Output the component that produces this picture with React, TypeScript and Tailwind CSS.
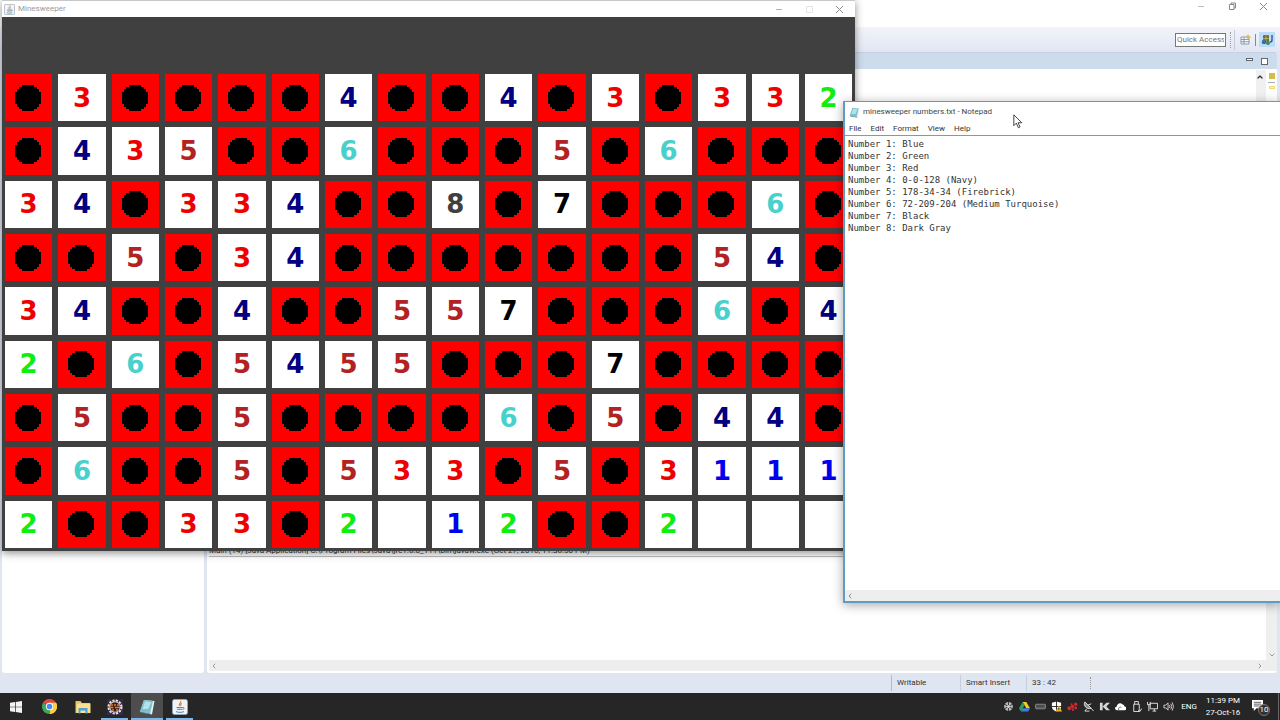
import { ReactNode } from "react";
import { ChevronLeft, ChevronRight, ChevronDown, ChevronUp } from "lucide-react";

// "M" is a mine, "." is an empty cell
const board = [
  "M3MMMM4MM4M3M332",
  "M435MM6MMM5M6MMM",
  "34M334MM8M7MMM6M",
  "MM5M34MMMMMMM54M",
  "34MM4MM557MMM6M4",
  "2M6M5455MMM7MMMM",
  "M5MM5MMMM6M5M44M",
  "M6MM5M533M5M3111",
  "2MM33M2.12MM2...",
];

const colors: Record<string, string> = {
  "1": "text-[#0000ee]",
  "2": "text-[#0fee0f]",
  "3": "text-[#ee0000]",
  "4": "text-[#000080]",
  "5": "text-[#b22222]",
  "6": "text-[#48d1cc]",
  "7": "text-black",
  "8": "text-[#404040]",
};

const notes = [
  "Number 1: Blue",
  "Number 2: Green",
  "Number 3: Red",
  "Number 4: 0-0-128 (Navy)",
  "Number 5: 178-34-34 (Firebrick)",
  "Number 6: 72-209-204 (Medium Turquoise)",
  "Number 7: Black",
  "Number 8: Dark Gray",
];

function Mine() {
  return (
    <svg viewBox="0 0 26 26" className="mr-px h-[26px] w-[26px]" shapeRendering="crispEdges">
      <path d="M7 0h12v2h3v2h2v3h2v12h-2v3h-2v2h-3v2H7v-2H4v-2H2v-3H0V7h2V4h2V2h3z" />
    </svg>
  );
}

function Cell({ value }: { value: string }) {
  if (value === "M") {
    return (
      <button aria-label="Mine" className="flex aspect-square items-center justify-center bg-[#fe0000]">
        <Mine />
      </button>
    );
  }
  return (
    <button
      aria-label={value === "." ? "Empty" : undefined}
      className={`flex aspect-square items-center justify-center bg-white font-['DejaVu_Sans',sans-serif] text-[26px] leading-none font-bold ${colors[value] ?? ""}`}
    >
      {value === "." ? null : value}
    </button>
  );
}

function JavaIcon({ className }: { className: string }) {
  return (
    <svg viewBox="0 0 16 16" className={className}>
      <rect x="0.5" y="0.5" width="15" height="15" rx="2" fill="#f1f3f5" stroke="#8fa3b8" />
      <path d="M8.5 2c1.5 1.6-2.6 2.6-1 5M9.8 4.2C8.4 5 8.5 6 8.8 7" fill="none" stroke="#e2772c" strokeWidth="1.1" />
      <path d="M4.5 8.5h6.3M5 10.3h5.3M4 12.6c2 1 6 1 8 0M10.8 8.6c2-.4 1.6 1.6-.2 1.9" fill="none" stroke="#5680a6" />
    </svg>
  );
}

function NotepadIcon({ className }: { className: string }) {
  return (
    <svg viewBox="0 0 16 16" className={className}>
      <path d="M5 1 15.500 2 13 15.500 1 13z" fill="#e3f1f3" />
      <path d="M5 1 14 2 11 14.500 1 12.500z" fill="#7fbfcb" />
      <path d="M6 2.500 12.500 3.300 9 10 3.500 10z" fill="#b3e3ea" />
      <path d="M1 12.500 11 14.500 13 15.500 2 13.800z" fill="#4d8793" />
    </svg>
  );
}

function WindowGlyph({ kind, className }: { kind: "min" | "max" | "restore" | "close"; className: string }) {
  const shapes: Record<string, ReactNode> = {
    min: <path d="M1 4.500h6" />,
    max: <path d="M1.500 1.500h6v6h-6z" />,
    restore: <path d="M1.500 2.500h4.500v5H1.500zM3 2.500V1h4.500v5H6" />,
    close: <path d="M1 1l7 7M8 1 1 8" />,
  };
  return (
    <svg viewBox="0 0 9 9" className={`h-[9px] w-[9px] ${className}`} fill="none" stroke="currentColor">
      {shapes[kind]}
    </svg>
  );
}

function Minesweeper() {
  return (
    <section className="absolute top-0 left-[2px] w-2/3 border-t border-[#c8c8c8] bg-[#404040] shadow-[0_2px_8px_rgba(0,0,0,0.45)]">
      <header className="flex h-4 items-center bg-white pl-[2px] text-[8px] text-[#9a9a9a]">
        <JavaIcon className="mr-[3px] h-[11px] w-[11px]" />
        <h1 className="flex-1">Minesweeper</h1>
        <div className="flex items-center gap-[21px] pr-[11px]">
          <button aria-label="Minimize"><WindowGlyph kind="min" className="text-[#b0b0b0]" /></button>
          <button aria-label="Maximize"><WindowGlyph kind="max" className="text-[#e4e4e4]" /></button>
          <button aria-label="Close"><WindowGlyph kind="close" className="text-[#8c8c8c]" /></button>
        </div>
      </header>
      <div className="grid grid-cols-16 gap-[6px] px-[3px] pt-[57px] pb-[3px]">
        {board.flatMap((row, y) => row.split("").map((value, x) => <Cell key={`${x}-${y}`} value={value} />))}
      </div>
    </section>
  );
}

function Notepad() {
  return (
    <section className="absolute top-[101px] right-0 bottom-[117px] left-[843px] flex flex-col border-2 border-r-0 border-t border-[#5f9cc4] bg-white shadow-[0_2px_10px_rgba(0,0,0,0.35)]">
      <header className="flex h-5 items-center pl-[4px] text-[8px] text-[#444]">
        <NotepadIcon className="mr-[3px] h-[11px] w-[11px]" />
        <h2>minesweeper numbers.txt - Notepad</h2>
      </header>
      <nav className="flex h-[14px] items-center gap-[9px] border-b border-[#6f9fc0] pl-[4px] text-[8px] text-[#333]">
        {["File", "Edit", "Format", "View", "Help"].map((item) => (
          <button key={item}>{item}</button>
        ))}
      </nav>
      <textarea
        aria-label="Text editor"
        readOnly
        wrap="off"
        defaultValue={notes.join("\n")}
        className="min-h-0 flex-1 resize-none overflow-hidden px-[3px] pt-[2px] font-['DejaVu_Sans_Mono',monospace] text-[9px] leading-[12px] text-[#333] outline-none"
      />
      <div className="flex h-[11px] items-center bg-[#eeeeee] pl-px">
        <ChevronLeft className="h-2 w-2 text-[#888]" strokeWidth={3} />
      </div>
    </section>
  );
}

function Ide() {
  return (
    <main className="flex min-h-0 flex-1 flex-col bg-[#dfe5f1]">
      <div className="flex h-[27px] items-start justify-end gap-[22px] bg-white pt-[2px] pr-3 text-[#888]">
        <button aria-label="Minimize IDE"><WindowGlyph kind="min" className="text-[#bbb]" /></button>
        <button aria-label="Restore IDE"><WindowGlyph kind="restore" className="" /></button>
        <button aria-label="Close IDE"><WindowGlyph kind="close" className="" /></button>
      </div>
      <div className="flex h-[25px] items-center justify-end bg-gradient-to-b from-[#f3f4fa] to-[#e0e6f2] pr-[5px]">
        <input
          aria-label="Quick Access"
          placeholder="Quick Access"
          className="h-[14px] w-[51px] border border-[#777] bg-white px-px text-[8px] text-[#777] placeholder:text-[#777]"
        />
        <span className="ml-1 h-4 border-l border-dotted border-[#999]" />
        <span className="ml-[3px] h-5 border-l border-[#c5cad4]" />
        <button aria-label="Open Perspective" className="ml-[5px]">
          <svg viewBox="0 0 11 11" className="h-[11px] w-[11px]">
            <path d="M1 3h8v7H1zM1 5.500h8M1 7.700h8M4 3v7" fill="#f8fbff" stroke="#6f8b9c" strokeWidth="0.800" />
            <path d="M8 0l1 2 2 1-2 1-1 2-1-2-2-1 2-1z" fill="#e3b453" />
          </svg>
        </button>
        <span className="mr-[3px] ml-1 h-3 border-l border-[#888]" />
        <button aria-label="Java" className="flex h-[15px] w-4 items-center justify-center bg-[#bddcf7]">
          <svg viewBox="0 0 12 12" className="h-3 w-3">
            <rect x="2" y="1" width="6" height="7" rx="1" fill="#716d3b" />
            <path d="M2 4.500h6M5 1v7" stroke="#c9bd78" strokeWidth="0.700" />
            <circle cx="3" cy="8" r="2.300" fill="#3d6f9a" />
            <circle cx="7" cy="9" r="2" fill="#3d8b64" />
            <path d="M11 1v5c0 1.500-1 2-2 2" fill="none" stroke="#245b9c" strokeWidth="1.400" />
          </svg>
        </button>
      </div>
      <div className="flex min-h-0 flex-1 gap-[3px] pr-[3px] pl-[2px]">
        <div className="w-[202px] shrink-0 rounded-b-[3px] bg-white" />
        <div className="flex min-w-0 flex-1 flex-col overflow-hidden rounded-[3px] bg-white">
          <div className="flex h-[17px] shrink-0 items-center justify-end gap-2 border-t border-[#c5d0e0] bg-[#cddcec] pr-[9px]">
            <button aria-label="Minimize view" className="mb-[3px] h-[3px] w-[7px] border border-[#666] bg-white" />
            <button aria-label="Maximize view" className="h-[7px] w-[7px] border border-[#666] bg-white" />
          </div>
          <div className="flex h-[32px] shrink-0 justify-end gap-[2px] pt-px pr-[2px]">
            <div className="w-[10px] bg-[#f0f0f0] pt-[3px]">
              <ChevronUp className="h-2 w-2 text-[#333]" strokeWidth={4} />
            </div>
            <div className="flex w-[7px] flex-col items-center gap-[3px] pt-[3px]">
              <span className="h-[6px] w-[6px] bg-[#d2bc4c]" />
              <span className="h-px w-[7px] bg-[#aaa]" />
              <span className="h-[3px] w-[6px] border border-[#ecd97a] bg-[#fff3b0]" />
            </div>
          </div>
          <div className="flex min-h-0 flex-1">
            <div className="flex flex-1 flex-col justify-end">
              <p className="mb-[103px] ml-[2px] border-b border-[#bbb] text-[8px] leading-[10px] text-[#333]">
                Main (14) [Java Application] C:\Program Files\Java\jre1.8.0_111\bin\javaw.exe (Oct 27, 2016, 11:38:50 PM)
              </p>
            </div>
            <div className="flex w-[11px] items-end justify-center bg-[#efefef] pb-px">
              <ChevronDown className="h-2 w-2 text-[#999]" strokeWidth={3} />
            </div>
          </div>
          <div className="mb-[2px] ml-[2px] flex h-[11px] shrink-0 items-center justify-between bg-[#eeeeee] pr-[13px] pl-px">
            <ChevronLeft className="h-2 w-2 text-[#999]" strokeWidth={3} />
            <ChevronRight className="h-2 w-2 text-[#999]" strokeWidth={3} />
          </div>
        </div>
      </div>
      <footer className="flex h-5 shrink-0 items-center justify-end pr-[189px] text-[8px] text-[#333]">
        <span className="flex h-4 w-[69px] items-center border-l border-[#b4bac6] pl-[5px]">Writable</span>
        <span className="flex h-4 w-[66px] items-center border-l border-[#c8cedb] pl-[5px]">Smart Insert</span>
        <span className="flex h-4 w-16 items-center border-l border-[#c8cedb] pl-[5px]">33 : 42</span>
        <span className="h-3 w-px border-l border-dotted border-[#999]" />
      </footer>
    </main>
  );
}

function TaskButton({ label, state, children }: { label: string; state?: "open" | "active"; children: ReactNode }) {
  const look =
    state === "active" ? "border-b-2 border-[#76b9ed] bg-[#4d4d4d] pt-[2px]" : state === "open" ? "border-b-2 border-[#76b9ed] pt-[2px]" : "";
  return (
    <button aria-label={label} className={`flex h-[27px] items-center justify-center ${state === "active" ? "w-8" : "w-[27px]"} ${look}`}>
      {children}
    </button>
  );
}

function Tray() {
  const icon = "h-[11px] w-[11px]";
  return (
    <div className="flex items-center gap-[5px]">
      <svg viewBox="0 0 12 12" className={icon}>
        <circle cx="6" cy="6" r="4.800" fill="#b8b8b8" />
        <path d="M6 0v12M0.800 3l10.400 6M11.200 3 .8 9" stroke="#262626" strokeWidth="0.900" />
        <circle cx="6" cy="6" r="1.500" fill="#ddd" />
      </svg>
      <svg viewBox="0 0 12 12" className={icon}>
        <path d="M4 1h4l4 7H8z" fill="#f9c91f" />
        <path d="M4 1 0 8l2 3.500L6 4.500z" fill="#2ca05a" />
        <path d="M4 8h8l-2 3.500H2z" fill="#3f7fe0" />
      </svg>
      <svg viewBox="0 0 12 12" className={icon}>
        <rect x="0.500" y="3.500" width="11" height="5" rx="1" fill="#5c5c5c" stroke="#888" />
        <path d="M2 5.500h8" stroke="#111" strokeDasharray="1 1" />
      </svg>
      <svg viewBox="0 0 12 12" className={icon}>
        <path d="M6 0.500 11 2v4c0 3-2 4.500-5 5.500C3 10.500 1 9 1 6V2z" fill="#fff" />
        <path d="M6 0v12M1 6h10" stroke="#262626" />
        <path d="M8.500 5 12 11.500H5z" fill="#f2b632" />
        <path d="M8.500 7.500v2" stroke="#262626" />
      </svg>
      <svg viewBox="0 0 12 12" className={icon} fill="#d5262b">
        <circle cx="2.500" cy="8" r="2.200" />
        <circle cx="6" cy="6" r="1.800" />
        <circle cx="9.500" cy="3.500" r="1.800" />
        <circle cx="9.500" cy="7.500" r="1.600" />
        <circle cx="5" cy="3.500" r="1.100" />
        <circle cx="6.500" cy="9.500" r="1.300" />
      </svg>
      <svg viewBox="0 0 12 12" className={icon} fill="none" stroke="#e6e6e6">
        <path d="M2 1c-2 4 2 8.500 7 7z" fill="#8c8c8c" />
        <path d="M5.500 4.500 9 3M4 8.500 2 11h5M9 8l2.500 3" />
      </svg>
      <svg viewBox="0 0 12 12" className={icon} fill="#d5d5d5">
        <path d="M1 2h3v8H1zM4 6l4-4h4L8 6l4 4H8z" />
      </svg>
      <svg viewBox="0 0 12 12" className={icon} fill="#fff">
        <path d="M2 10a2 2 0 0 1 0-4 3.500 3.500 0 0 1 6-2.500A3 3 0 0 1 10.500 6a2 2 0 0 1 0 4z" />
        <path d="M4 10c-1-3 2-4 3-3" fill="none" stroke="#262626" strokeWidth="0.700" />
      </svg>
      <svg viewBox="0 0 12 12" className={icon} fill="none" stroke="#e8e8e8">
        <path d="M4 3.500V0.500h4v3M3 3.500h6v8H3zM8 10l1.500 1.500L12 8" />
      </svg>
      <svg viewBox="0 0 12 12" className={icon} fill="none" stroke="#e8e8e8">
        <path d="M3.500 2.500h8v6h-8zM6 11h4M8 8.500V11M0.500 1v3h3V1M2 4v7" />
      </svg>
      <svg viewBox="0 0 12 12" className={icon} fill="none" stroke="#e8e8e8">
        <path d="M1 4.500h2L5.500 2v8L3 7.500H1zM7 4.500q1 1.500 0 3M8.500 3q2 3 0 6M10 1.500q3 4.500 0 9" strokeWidth="0.900" />
      </svg>
    </div>
  );
}

function Taskbar() {
  return (
    <footer className="flex h-[27px] shrink-0 items-center bg-[#262626] text-[8px] text-white">
      <div className="flex gap-[5px] pl-[2px]">
        <TaskButton label="Start">
          <svg viewBox="0 0 12 12" className="h-3 w-3" fill="#f4f4f4">
            <path d="M0 1.700 5 1v4.700H0zM5.700.9 12 0v5.700H5.700zM0 6.300h5V11l-5-.7zM5.700 6.300H12V12l-6.300-.9z" />
          </svg>
        </TaskButton>
        <div className="ml-[2px] flex gap-[6px]">
          <TaskButton label="Chrome">
            <svg viewBox="0 0 16 16" className="h-[15px] w-[15px]">
              <path d="M8 8 1.070 4A8 8 0 0 1 14.930 4z" fill="#e04a3b" />
              <path d="M8 8 14.930 4A8 8 0 0 1 8 16z" fill="#fbce3c" />
              <path d="M8 8v8A8 8 0 0 1 1.070 4z" fill="#3fa757" />
              <path d="M8 4h6.930A8 8 0 0 1 8 16l3.500-6z" fill="#fbce3c" />
              <circle cx="8" cy="8" r="3.900" fill="#fff" />
              <circle cx="8" cy="8" r="3" fill="#4a8af0" />
            </svg>
          </TaskButton>
          <TaskButton label="File Explorer">
            <svg viewBox="0 0 16 14" className="h-[14px] w-4">
              <path d="M0.500 1h5l1.500 2H15v10H0.500z" fill="#e9c25c" />
              <path d="M1.500 3.500H15.500V13H1.500z" fill="#fbe08e" />
              <path d="M3.500 13.500V8h9v5.500H10.500v-3h-5v3z" fill="#4ba3d8" />
            </svg>
          </TaskButton>
        </div>
        <TaskButton label="Eclipse" state="open">
          <svg viewBox="0 0 16 16" className="h-4 w-4">
            <rect width="16" height="16" fill="#35284f" />
            <circle cx="8" cy="8" r="6.500" fill="none" stroke="#e8e4df" strokeWidth="2" strokeDasharray="2.200 1.200" />
            <circle cx="8" cy="8" r="5.200" fill="#3b1e1c" stroke="#f3eee8" strokeWidth="0.800" />
            <path d="M3 6h3M7 6h2M10 6h3M2.500 8.500h4M8 8.500h5M5 11h2M9 11h2" stroke="#dc7b35" strokeWidth="1.300" />
          </svg>
        </TaskButton>
        <div className="-ml-[2px] flex gap-[3px]">
          <TaskButton label="Notepad" state="active">
            <NotepadIcon className="h-4 w-4" />
          </TaskButton>
          <TaskButton label="Minesweeper" state="open">
            <JavaIcon className="h-4 w-4" />
          </TaskButton>
        </div>
      </div>
      <div className="ml-auto flex items-center">
        <Tray />
        <span className="ml-[7px]">ENG</span>
        <time className="ml-2 w-9 text-center leading-[12px] whitespace-nowrap">
          11:39 PM
          <br />
          27-Oct-16
        </time>
        <button aria-label="Notifications" className="relative ml-[11px] flex h-[18px] w-[18px] items-start">
          <svg viewBox="0 0 12 12" className="mt-[2px] h-[11px] w-[11px]">
            <path d="M0 0h12v9H5l-3 3V9H0z" fill="#fff" />
            <path d="M2 2.500h8M2 4.500h8M2 6.500h6" stroke="#262626" strokeWidth="0.800" />
          </svg>
          <span className="absolute right-0 bottom-0 flex h-3 w-3 items-center justify-center rounded-full border border-[#777] bg-[#333] text-[8px] leading-none">
            10
          </span>
        </button>
        <span className="ml-2 h-[27px] w-[2px] border-l border-[#666]" />
      </div>
    </footer>
  );
}

export default function App() {
  return (
    <div className="relative flex h-screen flex-col overflow-hidden font-[Roboto,'Noto_Sans',sans-serif]">
      <Ide />
      <Taskbar />
      <Minesweeper />
      {/* covers the last column of the board */}
      <Notepad />
      <svg viewBox="0 0 12 18" className="pointer-events-none absolute top-[113px] left-[1013px] h-[17px] w-[10px]">
        <path d="M1 1v13l3-3 2.500 5.500 2-1L6 10.500h4.500z" fill="#fff" stroke="#222" strokeWidth="1" />
      </svg>
    </div>
  );
}
